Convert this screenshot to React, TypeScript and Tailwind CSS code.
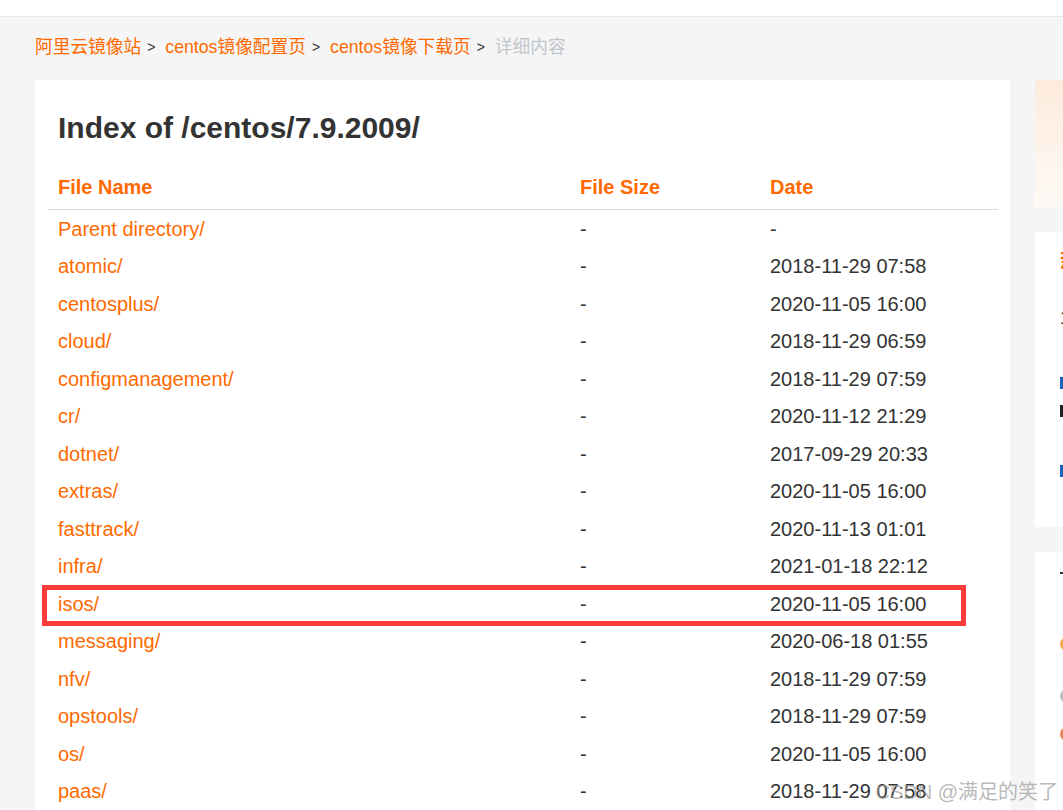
import React from "react";

const rows: [string, string, string][] = [
  ["Parent directory/", "-", "-"],
  ["atomic/", "-", "2018-11-29 07:58"],
  ["centosplus/", "-", "2020-11-05 16:00"],
  ["cloud/", "-", "2018-11-29 06:59"],
  ["configmanagement/", "-", "2018-11-29 07:59"],
  ["cr/", "-", "2020-11-12 21:29"],
  ["dotnet/", "-", "2017-09-29 20:33"],
  ["extras/", "-", "2020-11-05 16:00"],
  ["fasttrack/", "-", "2020-11-13 01:01"],
  ["infra/", "-", "2021-01-18 22:12"],
  ["isos/", "-", "2020-11-05 16:00"],
  ["messaging/", "-", "2020-06-18 01:55"],
  ["nfv/", "-", "2018-11-29 07:59"],
  ["opstools/", "-", "2018-11-29 07:59"],
  ["os/", "-", "2020-11-05 16:00"],
  ["paas/", "-", "2018-11-29 07:58"],
];

const font = { fontFamily: '"Liberation Sans", Arial, "Noto Sans CJK SC", sans-serif' };

export default function App() {
  return (
    <div className="relative w-full h-[810px] overflow-hidden bg-[#f5f5f5]" style={font}>
      <div className="h-[17px] bg-white border-b border-[#e8e8e8]" />
      <div className="pl-[35px] mt-[18px] h-[24px] flex items-center text-[17.7px] leading-[24px]">
        <span className="text-[#ff6a00]">阿里云镜像站</span>
        <span className="ml-[6px] mr-[10px] text-[14px] text-[#333]">&gt;</span>
        <span className="text-[#ff6a00]">centos镜像配置页</span>
        <span className="ml-[6px] mr-[10px] text-[14px] text-[#333]">&gt;</span>
        <span className="text-[#ff6a00]">centos镜像下载页</span>
        <span className="ml-[6px] mr-[10px] text-[14px] text-[#333]">&gt;</span>
        <span className="text-[#c0c6cc]">详细内容</span>
      </div>
      <div className="flex items-start pl-[35px] mt-[21px] gap-[25px]">
        <div className="w-[975px] shrink-0 bg-white pl-[13px] pr-[12px] pb-[20px]">
          <h1 className="mt-[30px] pl-[10px] text-[30px] leading-[36px] font-bold text-[#333]">
            Index of /centos/7.9.2009/
          </h1>
          <div className="mt-[19px] h-[45px] flex items-center border-b border-[#dddddd] text-[20px] font-bold text-[#ff6a00]">
            <div className="w-[522px] pl-[10px]">File Name</div>
            <div className="w-[190px] pl-[10px]">File Size</div>
            <div className="flex-1 pl-[10px]">Date</div>
          </div>
          {rows.map(([name, size, date], i) => (
            <div key={name} className="relative h-[37.5px] flex items-center text-[20px] leading-[24px]">
              <div className="w-[522px] pl-[10px] text-[#ff6a00]">{name}</div>
              <div className="w-[190px] pl-[10px] text-[#333]">{size}</div>
              <div className="flex-1 pl-[10px] text-[#333]">{date}</div>
              {i === 10 && (
                <div className="absolute left-[-6px] right-[32px] top-0 h-[41px] border-[5px] border-[#ff3b3b]" />
              )}
            </div>
          ))}
        </div>
        <div className="w-[300px] shrink-0 flex flex-col gap-[25px]">
          <div className="h-[127px] bg-gradient-to-b from-[#fdebdc] to-[#fffaf6]" />
          <div className="h-[295px] bg-white pl-[25px] flex flex-col">
            <div className="mt-[16px] text-[20px] leading-[24px] text-[#ff6a00] font-bold">热门推荐</div>
            <div className="mt-[34px] text-[18px] leading-[24px] text-[#333]">1. 镜像站使用帮助</div>
            <div className="mt-[47px] flex items-center gap-2">
              <span className="w-[4px] h-[12px] bg-[#1f5fbf]" />
            </div>
            <div className="mt-[16px] flex items-center gap-2">
              <span className="w-[4px] h-[12px] bg-[#222]" />
            </div>
            <div className="mt-[48px] flex items-center gap-2">
              <span className="w-[4px] h-[12px] bg-[#1f5fbf]" />
            </div>
          </div>
          <div className="h-[300px] bg-white pl-[25px] flex flex-col">
            <div className="mt-[20px] w-[10px] h-[2px] bg-[#333]" />
            <div className="mt-[63px] w-[14px] h-[14px] rounded-full bg-[#f6a94a]" />
            <div className="mt-[38px] w-[14px] h-[14px] rounded-full bg-[#b9c1cc]" />
            <div className="mt-[24px] w-[14px] h-[14px] rounded-full bg-[#e8875a]" />
          </div>
        </div>
      </div>
      <div className="absolute right-[5px] bottom-[6px] text-[20px] leading-[24px] text-[#9a9a9a]/70">
        CSDN @满足的笑了
      </div>
    </div>
  );
}
